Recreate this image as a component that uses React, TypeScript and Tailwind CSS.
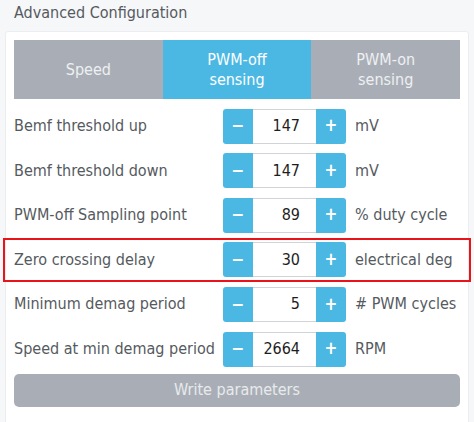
import React from "react";

const rows = [
  { label: "Bemf threshold up", value: "147", unit: "mV" },
  { label: "Bemf threshold down", value: "147", unit: "mV" },
  { label: "PWM-off Sampling point", value: "89", unit: "% duty cycle" },
  { label: "Zero crossing delay", value: "30", unit: "electrical deg", hl: true },
  { label: "Minimum demag period", value: "5", unit: "# PWM cycles" },
  { label: "Speed at min demag period", value: "2664", unit: "RPM" },
];

function Row({ label, value, unit, hl }: { label: string; value: string; unit: string; hl?: boolean }) {
  return (
    <div className="relative flex items-center h-[44.6px]">
      {hl && (
        <div className="absolute -left-[11px] -right-[11px] top-0 bottom-0 border-[2.5px] border-[#e8141a] pointer-events-none" />
      )}
      <div className="w-[209px] text-[16px] text-[#555a60] whitespace-nowrap">{label}</div>
      <div className="flex h-[35px]">
        <div className="w-[30px] bg-[#4bb8e4] rounded-l-[3px] flex items-center justify-center text-white text-[17px] font-bold">−</div>
        <div className="w-[63px] bg-white border-y border-[#d0d4d8] flex items-center justify-end pr-[16px] text-[16px] text-[#1e1e1e]">{value}</div>
        <div className="w-[30px] bg-[#4bb8e4] rounded-r-[3px] flex items-center justify-center text-white text-[17px] font-bold">+</div>
      </div>
      <div className="ml-[9px] text-[16px] text-[#555a60] whitespace-nowrap">{unit}</div>
    </div>
  );
}

export default function App() {
  return (
    <div
      className="w-[474px] h-[422px] overflow-hidden bg-[#f6f7f9]"
      style={{ fontFamily: '"DejaVu Sans Condensed", "DejaVu Sans", sans-serif', fontStretch: "condensed" }}
    >
      <div className="h-[31px] pl-[14px] pt-[1px] text-[16px] text-[#555a60]">Advanced Configuration</div>
      <div className="mx-[5px] bg-white border border-[#ebedf0] rounded-[3px] px-[8px] pt-[8px] pb-[20px]">
        <div className="flex h-[59px] text-[16px] leading-[20px]">
          <div className="flex-1 bg-[#a9aeb6] text-[#eef0f2] flex items-center justify-center">Speed</div>
          <div className="flex-1 bg-[#4bb8e4] text-white flex items-center justify-center text-center">PWM-off<br />sensing</div>
          <div className="flex-1 bg-[#a9aeb6] text-[#eef0f2] flex items-center justify-center text-center">PWM-on<br />sensing</div>
        </div>
        <div className="pt-[4.75px]">
          {rows.map((r) => (
            <Row key={r.label} {...r} />
          ))}
        </div>
        <div className="mt-[2.5px] h-[33px] bg-[#a9aeb6] rounded-[5px] flex items-center justify-center text-[16px] text-[#e8eaec]">
          Write parameters
        </div>
      </div>
    </div>
  );
}
